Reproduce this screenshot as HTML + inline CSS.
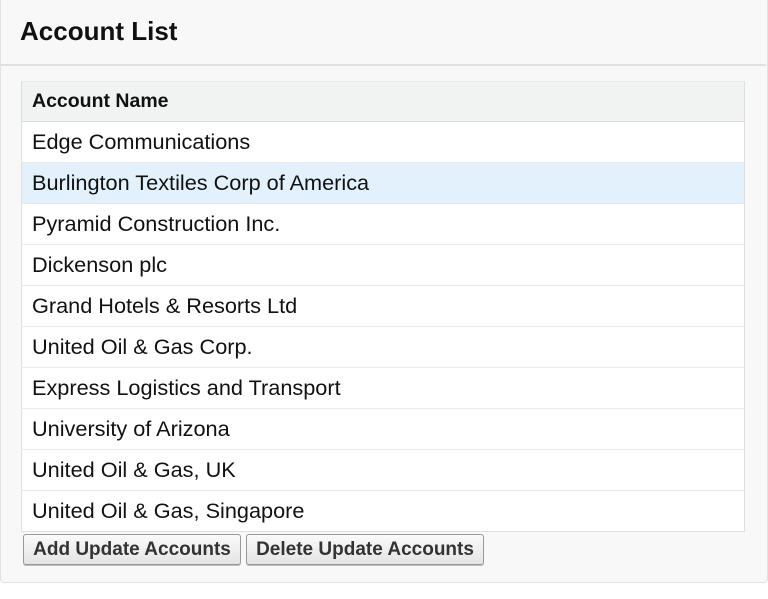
<!DOCTYPE html>
<html><head><style>
body{margin:0;background:#fff;font-family:"Liberation Sans",Arial,sans-serif;width:768px;height:599px;overflow:hidden}
.panel{position:absolute;left:0;top:-4px;width:766px;height:585px;background:#f8f8f8;border:1px solid #e2e2e2;border-radius:4px}
.hd{position:absolute;left:0;top:0;width:766px;height:64px;border-bottom:2px solid #e0e0e0}
.hd h1{position:absolute;left:20px;top:16px;margin:0;font-size:26px;font-weight:bold;color:#111}
table{position:absolute;left:21px;top:81px;width:724px;border-collapse:collapse;background:#fff;border:1px solid #dde0e0}
td,th{height:40px;padding:0 0 0 10px;text-align:left;font-size:21.7px;color:#111;border-top:1px solid #e8eaea;font-weight:normal}
th{height:39px;background:#f1f2f2;font-weight:bold;font-size:19.5px;border-bottom:1px solid #dcdede}
tr.h td{background:#e3f1fd}
.btn{position:absolute;top:534px;height:31px;border:1px solid #999;border-radius:3px;background:linear-gradient(#fafafa,#e4e4e4);font-size:19px;font-weight:bold;color:#333;line-height:29px;text-align:center;box-sizing:border-box;box-shadow:0 1px 0 #bbb;white-space:nowrap}
</style></head><body>
<div class="panel"></div>
<div class="hd"><h1>Account List</h1></div>
<table>
<tr><th>Account Name</th></tr>
<tr><td>Edge Communications</td></tr>
<tr class="h"><td>Burlington Textiles Corp of America</td></tr>
<tr><td>Pyramid Construction Inc.</td></tr>
<tr><td>Dickenson plc</td></tr>
<tr><td>Grand Hotels &amp; Resorts Ltd</td></tr>
<tr><td>United Oil &amp; Gas Corp.</td></tr>
<tr><td>Express Logistics and Transport</td></tr>
<tr><td>University of Arizona</td></tr>
<tr><td>United Oil &amp; Gas, UK</td></tr>
<tr><td>United Oil &amp; Gas, Singapore</td></tr>
</table>
<div class="btn" style="left:23px;width:218px">Add Update Accounts</div>
<div class="btn" style="left:246px;width:238px">Delete Update Accounts</div>
</body></html>
